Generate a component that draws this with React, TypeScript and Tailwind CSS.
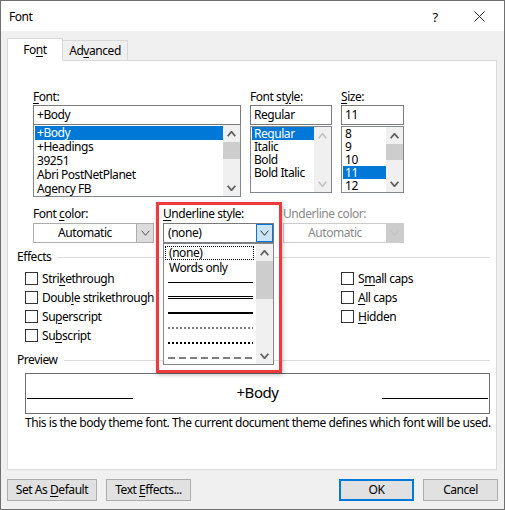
import React from 'react';

const U = ({ children }: { children: React.ReactNode }) => <span className="underline underline-offset-2">{children}</span>;

function Chev({ dir, color = '#606060', w = 9, sw = 1.4 }: { dir: 'up' | 'down'; color?: string; w?: number; sw?: number }) {
  const h = Math.round(w / 2) + 1;
  const pts = dir === 'down' ? `0.7,0.7 ${w / 2},${h - 0.7} ${w - 0.7},0.7` : `0.7,${h - 0.7} ${w / 2},0.7 ${w - 0.7},${h - 0.7}`;
  return (
    <svg width={w} height={h} viewBox={`0 0 ${w} ${h}`}>
      <polyline points={pts} fill="none" stroke={color} strokeWidth={sw} />
    </svg>
  );
}

function ScrollBar({ thumb, thumbH = 17, disabled }: { thumb?: boolean; thumbH?: number; disabled?: boolean }) {
  const c = disabled ? '#c4c4c4' : '#606060';
  return (
    <div className="w-[17px] h-full bg-[#f0f0f0] flex flex-col shrink-0">
      <div className="h-[17px] flex items-center justify-center shrink-0">
        <Chev dir="up" color={c} w={9} sw={1.8} />
      </div>
      <div className="flex-1">
        {thumb && <div className="bg-[#cdcdcd]" style={{ height: thumbH }} />}
      </div>
      <div className="h-[17px] flex items-center justify-center shrink-0">
        <Chev dir="down" color={c} w={9} sw={1.8} />
      </div>
    </div>
  );
}

function Check({ children }: { children: React.ReactNode }) {
  return (
    <div className="h-[19px] flex items-center gap-[4px]">
      <div className="w-[13px] h-[13px] border border-[#333] bg-white shrink-0" />
      <span>{children}</span>
    </div>
  );
}

function Btn({ children, primary, w }: { children: React.ReactNode; primary?: boolean; w: string }) {
  return (
    <div
      className={`${w} h-[22px] bg-[#e1e1e1] flex items-center justify-center ${
        primary ? 'border-2 border-[#0078d7]' : 'border border-[#adadad]'
      }`}
    >
      <span>{children}</span>
    </div>
  );
}

export default function App() {
  return (
    <div className="w-[505px] h-[510px] border border-[#707070] bg-[#f0f0f0] text-[12px] leading-[16px] tracking-[-0.45px] text-black font-['Noto_Sans',sans-serif] flex flex-col overflow-hidden">
      {/* title bar */}
      <div className="h-[30px] bg-white flex items-center pl-[8px] pt-px shrink-0">
        <span className="flex-1">Font</span>
        <span className="w-[20px] text-center mr-[29px] text-[13px]">?</span>
        <svg width="11" height="11" viewBox="0 0 11 11" className="mr-[19px]">
          <path d="M0.5 0.5 L10.5 10.5 M10.5 0.5 L0.5 10.5" stroke="#222" strokeWidth="1" />
        </svg>
      </div>

      <div className="pl-[6px] pt-[7px]">
        {/* tabs */}
        <div className="flex items-end h-[22px]">
          <div className="w-[56px] h-[23px] -mb-px relative z-10 bg-white border border-b-0 border-[#d9d9d9] flex items-center justify-center">
            <span>Fo<U>n</U>t</span>
          </div>
          <div className="w-[65px] h-[20px] border border-b-0 border-l-0 border-[#d9d9d9] flex items-center justify-center">
            <span>Ad<U>v</U>anced</span>
          </div>
        </div>

        {/* panel */}
        <div className="relative w-[490px] h-[410px] bg-white border border-[#d9d9d9] flex flex-col">
          {/* row 1 */}
          <div className="mt-[28px] pl-[25px] flex gap-[9px]">
            <div className="w-[208px]">
              <div className="h-[16px]"><U>F</U>ont:</div>
              <div className="h-[20px] border border-[#7a7a7a] pl-[3px] flex items-center">+Body</div>
              <div className="h-[72px] border border-t-0 border-[#828790] flex">
                <div className="flex-1 pt-[1px] pl-[1px] leading-[14px]">
                  <div className="h-[14px] bg-[#0078d7] text-white pl-[2px]">+Body</div>
                  <div className="h-[14px] pl-[2px]">+Headings</div>
                  <div className="h-[14px] pl-[2px]">39251</div>
                  <div className="h-[14px] pl-[2px]">Abri PostNetPlanet</div>
                  <div className="h-[14px] pl-[2px]">Agency FB</div>
                </div>
                <ScrollBar thumb />
              </div>
            </div>
            <div className="w-[82px]">
              <div className="h-[16px]">Font st<U>y</U>le:</div>
              <div className="h-[20px] border border-[#7a7a7a] pl-[3px] flex items-center">Regular</div>
              <div className="h-[67px] mt-[1px] border border-[#828790] flex">
                <div className="flex-1 min-w-0 pl-[1px] leading-[13px] whitespace-nowrap">
                  <div className="h-[13px] bg-[#0078d7] text-white pl-[2px]">Regular</div>
                  <div className="h-[13px] pl-[2px]">Italic</div>
                  <div className="h-[13px] pl-[2px]">Bold</div>
                  <div className="h-[13px] pl-[2px]">Bold Italic</div>
                </div>
                <ScrollBar disabled />
              </div>
            </div>
            <div className="w-[63px]">
              <div className="h-[16px]"><U>S</U>ize:</div>
              <div className="h-[20px] border border-[#7a7a7a] pl-[3px] flex items-center">11</div>
              <div className="h-[67px] mt-[1px] border border-[#828790] flex">
                <div className="flex-1 pl-[1px] leading-[13px]">
                  <div className="h-[13px] pl-[2px]">8</div>
                  <div className="h-[13px] pl-[2px]">9</div>
                  <div className="h-[13px] pl-[2px]">10</div>
                  <div className="h-[13px] bg-[#0078d7] text-white pl-[2px]">11</div>
                  <div className="h-[13px] pl-[2px]">12</div>
                </div>
                <ScrollBar thumb thumbH={16} />
              </div>
            </div>
          </div>

          {/* row 2 */}
          <div className="mt-[9px] pl-[25px] flex gap-[9px]">
            <div className="w-[121px]">
              <div className="h-[16px]">Font <U>c</U>olor:</div>
              <div className="h-[20px] mt-px border border-[#adadad] flex">
                <div className="flex-1 flex items-center justify-center">Automatic</div>
                <div className="w-[17px] bg-[#dcdcdc] border-l border-[#adadad] flex items-center justify-center">
                  <Chev dir="down" color="#555" w={9} sw={1} />
                </div>
              </div>
            </div>
            <div className="w-[111px]">
              <div className="h-[16px]"><U>U</U>nderline style:</div>
              <div className="h-[20px] mt-px border border-[#7a7a7a] flex">
                <div className="flex-1 flex items-center pl-[4px]">(none)</div>
                <div className="w-[17px] bg-[#cce4f7] border border-[#0078d7] flex items-center justify-center">
                  <Chev dir="down" color="#333" w={9} sw={1} />
                </div>
              </div>
            </div>
            <div className="w-[121px] text-[#8a8a8a]">
              <div className="h-[16px]">Underline color:</div>
              <div className="h-[20px] mt-px border border-[#cccccc] flex">
                <div className="flex-1 flex items-center justify-center">Automatic</div>
                <div className="w-[17px] bg-[#cccccc] flex items-center justify-center">
                  <Chev dir="down" color="#bfbfbf" w={9} sw={1} />
                </div>
              </div>
            </div>
          </div>

          {/* effects */}
          <div className="mt-[6px] pl-[9px] pr-[6px] h-[16px] flex items-center gap-[6px]">
            <span>Effects</span>
            <div className="flex-1 border-t border-[#dcdcdc]" />
          </div>
          <div className="mt-[4px] pl-[17px] flex">
            <div className="w-[316px]">
              <Check>Stri<U>k</U>ethrough</Check>
              <Check>Doub<U>l</U>e strikethrough</Check>
              <Check>Su<U>p</U>erscript</Check>
              <Check>Su<U>b</U>script</Check>
            </div>
            <div>
              <Check>S<U>m</U>all caps</Check>
              <Check><U>A</U>ll caps</Check>
              <Check><U>H</U>idden</Check>
            </div>
          </div>

          {/* preview */}
          <div className="mt-[7px] pl-[9px] pr-[6px] h-[16px] flex items-center gap-[6px]">
            <span>Preview</span>
            <div className="flex-1 border-t border-[#dcdcdc]" />
          </div>
          <div className="mt-[5px] ml-[17px] w-[465px] h-[41px] border border-[#6d6d6d] flex items-end pb-[14px] px-px">
            <div className="w-[106px] border-t border-black" />
            <div className="flex-1 text-center text-[15px] leading-[18px] mb-[-2px]">+Body</div>
            <div className="w-[106px] border-t border-black" />
          </div>
          <div className="mt-px pl-[17px] h-[16px] whitespace-nowrap">
            This is the body theme font. The current document theme defines which font will be used.
          </div>

          {/* open underline dropdown, highlighted */}
          <div className="absolute left-[148px] top-[141px] w-[126px] h-[171px] border-[3px] border-[#ee3a3f] shadow-[1px_2px_4px_rgba(0,0,0,0.25)]" />
          <div className="absolute left-[155px] top-[182px] w-[111px] h-[122px] border border-[#828790] bg-white flex">
            <div className="flex-1 pt-px pl-px leading-[15px]">
              <div className="h-[15px] flex items-center">
                <div className="h-[14px] w-[89px] border border-dotted border-black pl-[3px] leading-[12px]">(none)</div>
              </div>
              <div className="h-[15px] pl-[4px]">Words only</div>
              <div className="h-[15px] flex items-center px-[3px]"><div className="w-full border-t border-black" /></div>
              <div className="h-[15px] flex items-center px-[3px]"><div className="w-full h-[3px] border-y border-black" /></div>
              <div className="h-[15px] flex items-center px-[3px]"><div className="w-full border-t-2 border-black" /></div>
              <div className="h-[15px] flex items-center px-[3px]">
                <svg width="85" height="2"><line x1="0" y1="1" x2="85" y2="1" stroke="#000" strokeWidth="1" strokeDasharray="2 2" /></svg>
              </div>
              <div className="h-[15px] flex items-center px-[3px]">
                <svg width="85" height="2"><line x1="0" y1="1" x2="85" y2="1" stroke="#000" strokeWidth="2" strokeDasharray="2 2" /></svg>
              </div>
              <div className="h-[15px] flex items-center px-[3px]">
                <svg width="85" height="2"><line x1="0" y1="1" x2="85" y2="1" stroke="#000" strokeWidth="1" strokeDasharray="7 4" /></svg>
              </div>
            </div>
            <ScrollBar thumb thumbH={38} />
          </div>
        </div>

        {/* buttons */}
        <div className="mt-[9px] flex items-center">
          <Btn w="w-[90px]">Set As <U>D</U>efault</Btn>
          <div className="ml-[9px]"><Btn w="w-[85px]">Text <U>E</U>ffects...</Btn></div>
          <div className="ml-auto"><Btn primary w="w-[75px]">OK</Btn></div>
          <div className="ml-[9px] mr-[6px]"><Btn w="w-[75px]">Cancel</Btn></div>
        </div>
      </div>
    </div>
  );
}
